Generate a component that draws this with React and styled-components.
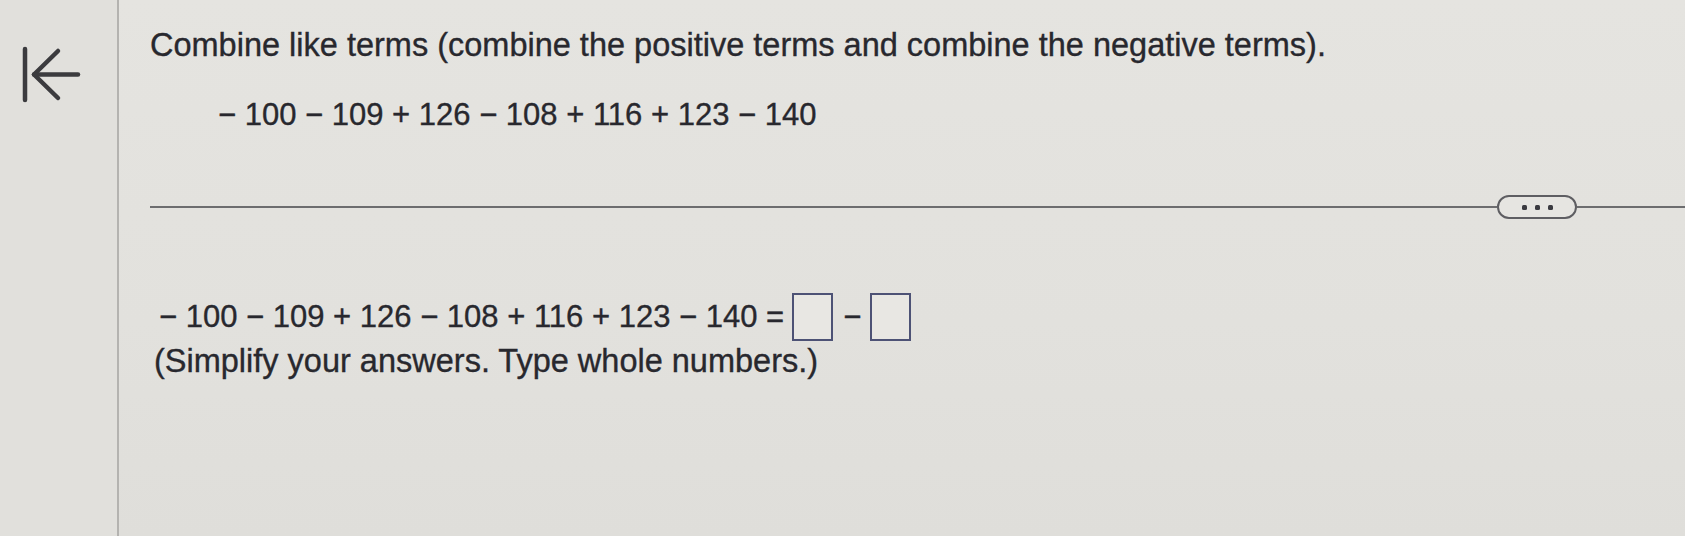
import React from "react";
import styled, { createGlobalStyle } from "styled-components";

const GlobalStyle = createGlobalStyle`
  html, body {
    margin: 0;
    padding: 0;
    background: #e3e2de;
  }
  #root {
    width: 1685px;
    height: 536px;
    overflow: hidden;
  }
`;

const Page = styled.div`
  display: flex;
  width: 1685px;
  height: 536px;
  background: linear-gradient(180deg, #e5e4e0 0%, #e2e1dd 60%, #dfdeda 100%);
  font-family: "Liberation Sans", Arial, sans-serif;
  color: #28282e;
  -webkit-text-stroke: 0.35px #28282e;
`;

const Sidebar = styled.aside`
  flex: 0 0 119px;
  border-right: 2px solid #b4b3b0;
  padding: 46px 0 0 20px;
  box-sizing: border-box;
  background: #e1e0dc;
`;

const BackButton = styled.button`
  display: block;
  width: 64px;
  height: 58px;
  padding: 0;
  border: 0;
  background: none;
  color: #3b3b3e;
  cursor: pointer;
`;

const Main = styled.main`
  flex: 1;
  display: flex;
  flex-direction: column;
  padding: 26px 0 0 31px;
  min-width: 0;
`;

const Title = styled.h1`
  margin: 0;
  font-size: 32.5px;
  line-height: 38px;
  font-weight: 400;
  white-space: nowrap;
`;

const Expression = styled.div`
  display: flex;
  align-items: center;
  margin-top: ${(p) => p.$gap}px;
  padding-left: ${(p) => p.$indent}px;
  font-size: 31px;
  line-height: 36px;
  white-space: pre;
`;

const Divider = styled.div`
  display: flex;
  align-items: center;
  margin-top: 62px;
  height: 24px;
`;

const Rule = styled.div`
  height: 2px;
  background: #6d6d6f;
  flex: ${(p) => (p.$grow ? "1" : `0 0 ${p.$width}px`)};
`;

const MoreButton = styled.button`
  flex: 0 0 80px;
  height: 24px;
  box-sizing: border-box;
  border: 2.5px solid #5e5e62;
  border-radius: 12px;
  background: #e6e5e1;
  display: flex;
  align-items: center;
  justify-content: center;
  gap: 8px;
  padding: 0;
  cursor: pointer;
`;

const Dot = styled.span`
  width: 5px;
  height: 5px;
  border-radius: 1.5px;
  background: #3a3a40;
`;

const AnswerBox = styled.span`
  display: inline-block;
  width: 41px;
  height: 48px;
  box-sizing: border-box;
  border: 2px solid #4d5275;
  background: #e8e7e3;
  margin: 0 ${(p) => p.$right || 0}px 0 ${(p) => p.$left || 0}px;
`;

const Note = styled.p`
  margin: 1px 0 0 4px;
  font-size: 32.5px;
  line-height: 38px;
`;

const expr = "\u2212 100 \u2212 109 + 126 \u2212 108 + 116 + 123 \u2212 140";

export default function App() {
  return (
    <>
      <GlobalStyle />
      <Page>
        <Sidebar>
          <BackButton aria-label="Back to start">
            <svg width="64" height="58" viewBox="0 0 64 58" fill="none">
              <path d="M5 3 V54" stroke="currentColor" strokeWidth="4.5" strokeLinecap="round" />
              <path d="M38 5 L14 28.5 L38 52" stroke="currentColor" strokeWidth="4.5" strokeLinecap="round" strokeLinejoin="round" />
              <path d="M14 28.5 H58" stroke="currentColor" strokeWidth="4.5" strokeLinecap="round" />
            </svg>
          </BackButton>
        </Sidebar>
        <Main>
          <Title>
            Combine like terms (combine the positive terms and combine the negative terms).
          </Title>
          <Expression $gap={33} $indent={68}>{expr}</Expression>
          <Divider>
            <Rule $grow />
            <MoreButton aria-label="More">
              <Dot />
              <Dot />
              <Dot />
            </MoreButton>
            <Rule $width={108} />
          </Divider>
          <Expression $gap={74} $indent={9}>
            {expr + " ="}
            <AnswerBox $left={8} $right={10} />
            {"\u2212"}
            <AnswerBox $left={9} />
          </Expression>
          <Note>(Simplify your answers. Type whole numbers.)</Note>
        </Main>
      </Page>
    </>
  );
}
